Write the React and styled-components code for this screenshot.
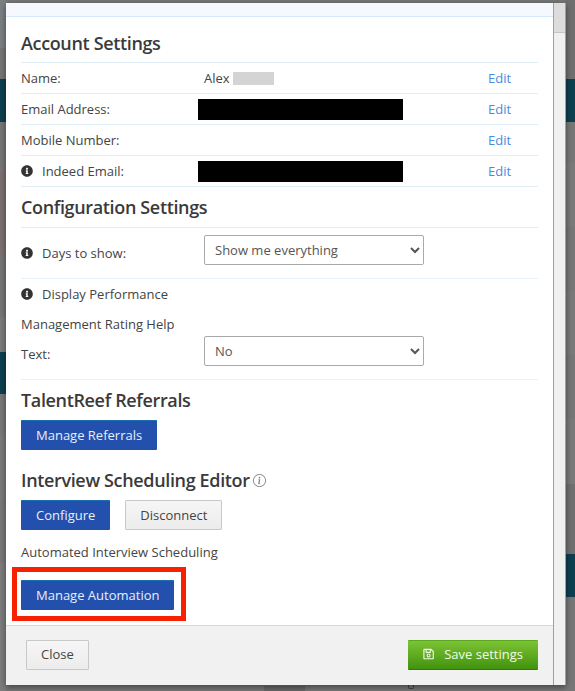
import React from 'react';
import styled, {createGlobalStyle} from 'styled-components';
import {FaInfoCircle, FaRegSave} from 'react-icons/fa';
import {BsInfoCircle} from 'react-icons/bs';


/*----- BACKDROP DATA -----*/
const leftBands = [
  {h: 48, c: '#7a7f82'}, {h: 31, c: '#757575'}, {h: 43, c: '#0d3f50'}, {h: 50, c: '#767676'},
  {h: 83, c: '#7c7070'}, {h: 62, c: '#767676'}, {h: 35, c: '#7b7b7b'}, {h: 42, c: '#0d3f50'},
  {h: 41, c: '#777777'}, {h: 64, c: '#7a7a7a'}, {h: 64, c: '#787878'}, {h: 128, c: '#7c7c7c'},
];

const rightBands = [
  {h: 79, c: '#6f6f6f'}, {h: 43, c: '#0d3f50'}, {h: 41, c: '#777777'}, {h: 64, c: '#7a7a7a'},
  {h: 64, c: '#777777'}, {h: 64, c: '#7a7a7a'}, {h: 64, c: '#777777'}, {h: 65, c: '#7a7a7a'},
  {h: 70, c: '#707070'}, {h: 43, c: '#0d3f50'}, {h: 94, c: '#777777'},
];


function App() {

  /*----- RENDER FUNCTIONS -----*/
  const renderBands = (bands) => bands.map((band, i) => <Band key={i} $h={band.h} $c={band.c} />);

  const renderAccountRow = (label, value, info) => (
    <AccountRow>
      <Label>{info && <InfoIcon />}{label}</Label>
      <Value>{value}</Value>
      <EditLink href="#">Edit</EditLink>
    </AccountRow>
  );

  /*----- RENDERER -----*/
  return (
    <Page>
      <GlobalStyle />
      <Backdrop>
        <SideStrip>{renderBands(leftBands)}</SideStrip>
        <BottomPeek>
          <PeekBlock />
          <PeekMark />
        </BottomPeek>
        <SideStrip $right>{renderBands(rightBands)}</SideStrip>
      </Backdrop>

      <Modal>
        <Panel>
          <TopBar />
          <Body>
            <FirstHeading>Account Settings</FirstHeading>
            {renderAccountRow('Name:', <>Alex <Blur /></>)}
            {renderAccountRow('Email Address:', <Redacted />)}
            {renderAccountRow('Mobile Number:', null)}
            {renderAccountRow('Indeed Email:', <Redacted />, true)}

            <Heading>Configuration Settings</Heading>
            <ConfigRow $h={51}>
              <Label><InfoIcon />Days to show:</Label>
              <SelectBottom>
                <Select defaultValue="all">
                  <option value="all">Show me everything</option>
                </Select>
              </SelectBottom>
            </ConfigRow>
            <ConfigRow $h={101}>
              <WrapLabel>
                <div><InfoIcon />Display Performance</div>
                <div>Management Rating Help</div>
                <div>Text:</div>
              </WrapLabel>
              <SelectBottom>
                <Select defaultValue="no">
                  <option value="no">No</option>
                </Select>
              </SelectBottom>
            </ConfigRow>

            <SectionTitle>TalentReef Referrals</SectionTitle>
            <Button>Manage Referrals</Button>

            <EditorTitle>
              Interview Scheduling Editor
              <BsInfoCircle />
            </EditorTitle>
            <ButtonRow>
              <Button>Configure</Button>
              <GreyButton>Disconnect</GreyButton>
            </ButtonRow>
            <Note>Automated Interview Scheduling</Note>
            <Annotated>
              <Button>Manage Automation</Button>
              <Highlight />
            </Annotated>
          </Body>

          <Footer>
            <GreyButton>Close</GreyButton>
            <SaveButton><FaRegSave />Save settings</SaveButton>
          </Footer>
        </Panel>

        <ScrollTrack>
          <ScrollThumb />
        </ScrollTrack>
      </Modal>
    </Page>
  );
}


/*==================== EXPORTS ====================*/
export default App;


const GlobalStyle = createGlobalStyle`
  html, body {
    margin: 0;
    padding: 0;
    background: #777;
    overflow: hidden;
  }
  * {
    box-sizing: border-box;
  }
`;

const Page = styled.div`
  position: relative;
  width: 575px;
  height: 691px;
  overflow: hidden;
  font-family: "Open Sans", sans-serif;
  font-size: 13px;
  color: #444;
`;

const Backdrop = styled.div`
  display: flex;
  justify-content: space-between;
  height: 100%;
  background: #767676;
`;

const SideStrip = styled.div`
  display: flex;
  flex-direction: column;
  flex-shrink: 0;
  width: ${props => (props.$right ? '10px' : '6px')};
`;

const Band = styled.div`
  height: ${props => props.$h}px;
  flex-shrink: 0;
  background: ${props => props.$c};
`;

const BottomPeek = styled.div`
  display: flex;
  align-items: flex-end;
  flex: 1;
  padding-left: 258px;
`;

const PeekBlock = styled.div`
  width: 41px;
  height: 5px;
  background: #676767;
`;

const PeekMark = styled.div`
  width: 6px;
  height: 4px;
  margin: 0 0 2px 103px;
  border: 1px solid #444;
  border-top: 0;
  border-radius: 0 0 2px 2px;
`;

const Modal = styled.div`
  position: absolute;
  top: 3px;
  left: 6px;
  display: flex;
  width: 560px;
  height: 682px;
  box-shadow: 0 2px 6px rgba(0, 0, 0, 0.45);
`;

const Panel = styled.div`
  display: flex;
  flex-direction: column;
  width: 548px;
  background: #fff;
  border-right: 1px solid #a0a0a0;
`;

const TopBar = styled.div`
  height: 14px;
  flex-shrink: 0;
  background: #f5f9ff;
  border-bottom: 1px solid #d6e8fb;
`;

const Body = styled.div`
  flex: 1;
  padding: 0 15px;
`;

const Heading = styled.h2`
  display: flex;
  align-items: center;
  height: 41px;
  margin: 0;
  font-size: 18px;
  font-weight: 600;
  color: #3a3a3a;
  letter-spacing: -0.35px;
  border-bottom: 1px solid #e0eff6;
`;

const FirstHeading = styled(Heading)`
  height: 46px;
  padding-top: 6px;
`;

const AccountRow = styled.div`
  display: flex;
  align-items: center;
  height: 31px;
  border-bottom: 1px solid #e0eff6;
`;

const Label = styled.div`
  display: flex;
  align-items: center;
  width: 183px;
  flex-shrink: 0;
`;

const InfoIcon = styled(FaInfoCircle)`
  width: 12px;
  height: 12px;
  margin-right: 9px;
  color: #333;
`;

const Value = styled.div`
  display: flex;
  align-items: center;
  gap: 3px;
  width: 284px;
  flex-shrink: 0;
`;

const Blur = styled.span`
  display: inline-block;
  width: 41px;
  height: 13px;
  background: #d4d4d4;
`;

const Redacted = styled.span`
  display: block;
  width: 205px;
  height: 21px;
  margin-left: -6px;
  background: #000;
`;

const EditLink = styled.a`
  color: #4a8be0;
  text-decoration: none;
`;

const ConfigRow = styled.div`
  display: flex;
  align-items: center;
  height: ${props => props.$h}px;
  border-bottom: 1px solid #e6f1fa;
`;

const WrapLabel = styled.div`
  display: flex;
  flex-direction: column;
  justify-content: space-between;
  align-self: flex-start;
  width: 183px;
  height: 78px;
  margin-top: 6px;
  flex-shrink: 0;

  div {
    display: flex;
    align-items: center;
    white-space: nowrap;
  }
`;

const SelectBottom = styled.div`
  align-self: flex-end;
  margin-bottom: 13px;
`;

const Select = styled.select`
  display: block;
  width: 220px;
  height: 30px;
  padding: 0 6px;
  font-family: "Open Sans", sans-serif;
  font-size: 13px;
  color: #555;
  background: #fff;
  border: 1px solid #aaa;
  border-radius: 2px;
`;

const SectionTitle = styled.h3`
  height: 40px;
  margin: 0;
  padding-top: 8px;
  font-size: 18px;
  line-height: 24px;
  font-weight: 600;
  color: #3a3a3a;
  letter-spacing: -0.35px;
`;

const EditorTitle = styled(SectionTitle)`
  display: flex;
  align-items: flex-start;
  gap: 3px;
  height: 50px;
  padding-top: 18px;

  svg {
    width: 13px;
    height: 13px;
    margin-top: 6px;
    color: #777;
  }
`;

const Button = styled.button`
  display: inline-flex;
  align-items: center;
  justify-content: center;
  height: 30px;
  padding: 0 15px 1px;
  font-family: "Open Sans", sans-serif;
  font-size: 13px;
  white-space: nowrap;
  color: #e8eefa;
  background: #2350ad;
  border: 0;
  border-top: 1px solid #1a6fb0;
  border-radius: 1px;
`;

const GreyButton = styled(Button)`
  padding: 0 14px 1px;
  color: #444;
  background: linear-gradient(#f6f6f6, #ececec);
  border: 1px solid #c8c8c8;
`;

const SaveButton = styled(Button)`
  justify-content: flex-start;
  gap: 10px;
  width: 130px;
  color: #f2f9e8;
  background: linear-gradient(#7cc234, #42930f);
  border: 0;
  border-top: 1px solid #5aa81e;
  border-bottom: 1px solid #2f7a08;

  svg {
    width: 12px;
    height: 12px;
  }
`;

const ButtonRow = styled.div`
  display: flex;
  gap: 15px;
`;

const Note = styled.div`
  height: 50px;
  padding-top: 13px;
`;

const Annotated = styled.div`
  position: relative;
  display: inline-block;
`;

const Highlight = styled.div`
  position: absolute;
  top: -13px;
  left: -9px;
  width: 174px;
  height: 54px;
  border: 5px solid #f52100;
  pointer-events: none;
`;

const Footer = styled.div`
  display: flex;
  align-items: center;
  justify-content: space-between;
  height: 60px;
  flex-shrink: 0;
  padding: 0 15px 2px 20px;
  background: #f1f1f1;
  border-top: 1px solid #d8d8d8;
`;

const ScrollTrack = styled.div`
  width: 12px;
  background: #f0f0f0;
  border-right: 1px solid #a0a0a0;
`;

const ScrollThumb = styled.div`
  height: 30px;
  background: #dcdcdc;
  border-bottom: 1px solid #c4c4c4;
`;
